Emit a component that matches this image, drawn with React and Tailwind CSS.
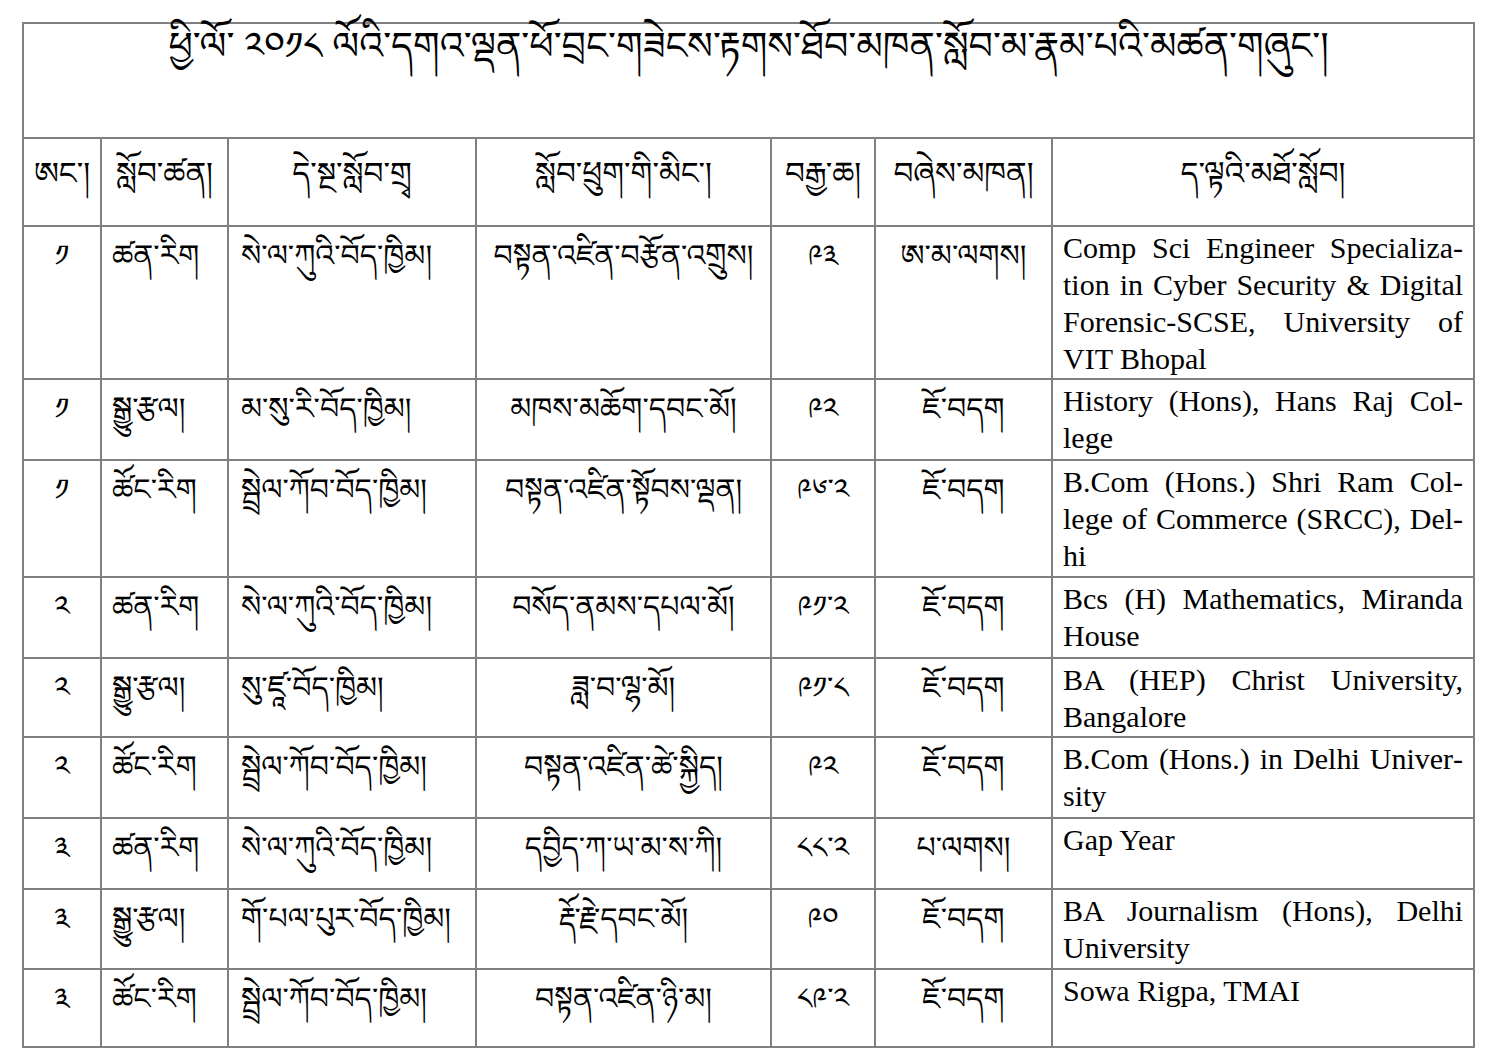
const tib = { fontFamily: '"Noto Serif Tibetan", "Noto Sans Tibetan", "Jomolhari", "Tibetan Machine Uni", "Microsoft Himalaya", "DejaVu Sans", serif' };

const rows = [
  { h: 'h-[153px]', no: '༡', stream: 'ཚན་རིག', school: 'སེ་ལ་ཀུའི་བོད་ཁྱིམ།', name: 'བསྟན་འཛིན་བརྩོན་འགྲུས།', pct: '༩༣', sponsor: 'ཨ་མ་ལགས།', now: 'Comp Sci Engineer Specializa\u00ADtion in Cyber Security & Digital Forensic-SCSE, University of VIT Bhopal' },
  { h: 'h-[81px]', no: '༡', stream: 'སྒྱུ་རྩལ།', school: 'མ་སུ་རི་བོད་ཁྱིམ།', name: 'མཁས་མཆོག་དབང་མོ།', pct: '༩༢', sponsor: 'ཇོ་བདག', now: 'History (Hons), Hans Raj Col\u00ADlege' },
  { h: 'h-[117px]', no: '༡', stream: 'ཚོང་རིག', school: 'སྦྲེལ་ཀོབ་བོད་ཁྱིམ།', name: 'བསྟན་འཛིན་སྟོབས་ལྡན།', pct: '༩༦་༢', sponsor: 'ཇོ་བདག', now: 'B.Com (Hons.) Shri Ram Col\u00ADlege of Commerce (SRCC), Del\u00ADhi' },
  { h: 'h-[81px]', no: '༢', stream: 'ཚན་རིག', school: 'སེ་ལ་ཀུའི་བོད་ཁྱིམ།', name: 'བསོད་ནམས་དཔལ་མོ།', pct: '༩༡་༢', sponsor: 'ཇོ་བདག', now: 'Bcs (H) Mathematics, Miranda House' },
  { h: 'h-[79px]', no: '༢', stream: 'སྒྱུ་རྩལ།', school: 'སུ་ཛཱ་བོད་ཁྱིམ།', name: 'ཟླ་བ་ལྷ་མོ།', pct: '༩༡་༨', sponsor: 'ཇོ་བདག', now: 'BA (HEP) Christ University, Bangalore' },
  { h: 'h-[81px]', no: '༢', stream: 'ཚོང་རིག', school: 'སྦྲེལ་ཀོབ་བོད་ཁྱིམ།', name: 'བསྟན་འཛིན་ཚེ་སྐྱིད།', pct: '༩༢', sponsor: 'ཇོ་བདག', now: 'B.Com (Hons.) in Delhi Univer\u00ADsity' },
  { h: 'h-[71px]', no: '༣', stream: 'ཚན་རིག', school: 'སེ་ལ་ཀུའི་བོད་ཁྱིམ།', name: 'དབྱིད་ཀ་ཡ་མ་ས་ཀི།', pct: '༨༨་༢', sponsor: 'པ་ལགས།', now: 'Gap Year' },
  { h: 'h-[80px]', no: '༣', stream: 'སྒྱུ་རྩལ།', school: 'གོ་པལ་པུར་བོད་ཁྱིམ།', name: 'རྡོ་རྗེ་དབང་མོ།', pct: '༩༠', sponsor: 'ཇོ་བདག', now: 'BA Journalism (Hons), Delhi University' },
  { h: 'h-[78px]', no: '༣', stream: 'ཚོང་རིག', school: 'སྦྲེལ་ཀོབ་བོད་ཁྱིམ།', name: 'བསྟན་འཛིན་ཉི་མ།', pct: '༨༩་༢', sponsor: 'ཇོ་བདག', now: 'Sowa Rigpa, TMAI' },
];

const headers = ['ཨང་།', 'སློབ་ཚན།', 'དེ་སྔ་སློབ་གྲྭ', 'སློབ་ཕྲུག་གི་མིང་།', 'བརྒྱ་ཆ།', 'བཞེས་མཁན།', 'ད་ལྟའི་མཐོ་སློབ།'];

const cell = 'border-2 border-[#808080] align-top';

export default function App() {
  return (
    <div className="w-[1499px] h-[1059px] bg-white pt-[22px] pl-[22px] text-black">
      <table className="table-fixed border-collapse w-[1451px]">
        <colgroup>
          <col className="w-[78px]" />
          <col className="w-[127px]" />
          <col className="w-[248px]" />
          <col className="w-[295px]" />
          <col className="w-[104px]" />
          <col className="w-[177px]" />
          <col className="w-[422px]" />
        </colgroup>
        <tbody>
          {/* Title */}
          <tr className="h-[115px]">
            <td colSpan={7} className={`${cell} text-center pt-[6px] text-[38px] leading-[54px]`} style={tib}>
              ཕྱི་ལོ་ ༢༠༡༨ ལོའི་དགའ་ལྡན་ཕོ་བྲང་གཟེངས་རྟགས་ཐོབ་མཁན་སློབ་མ་རྣམ་པའི་མཚན་གཞུང་།
            </td>
          </tr>

          {/* Headers */}
          <tr className="h-[88px]">
            {headers.map((h) => (
              <td key={h} className={`${cell} text-center pt-[22px] text-[31px] leading-[44px]`} style={tib}>
                {h}
              </td>
            ))}
          </tr>

          {rows.map((r, i) => (
            <tr key={i} className={r.h}>
              <td className={`${cell} text-center pt-[17px] text-[30px] leading-[40px]`} style={tib}>{r.no}</td>
              <td className={`${cell} pl-[10px] pt-[17px] text-[30px] leading-[40px]`} style={tib}>{r.stream}</td>
              <td className={`${cell} pl-[12px] pt-[17px] text-[30px] leading-[40px]`} style={tib}>{r.school}</td>
              <td className={`${cell} text-center pt-[17px] text-[30px] leading-[40px]`} style={tib}>{r.name}</td>
              <td className={`${cell} text-center pt-[17px] text-[30px] leading-[40px]`} style={tib}>{r.pct}</td>
              <td className={`${cell} text-center pt-[17px] text-[30px] leading-[40px]`} style={tib}>{r.sponsor}</td>
              <td className={`${cell} px-[10px] pt-[2px] text-[30px] leading-[37px] text-justify font-['Liberation_Serif',serif]`}>{r.now}</td>
            </tr>
          ))}
        </tbody>
      </table>
    </div>
  );
}
